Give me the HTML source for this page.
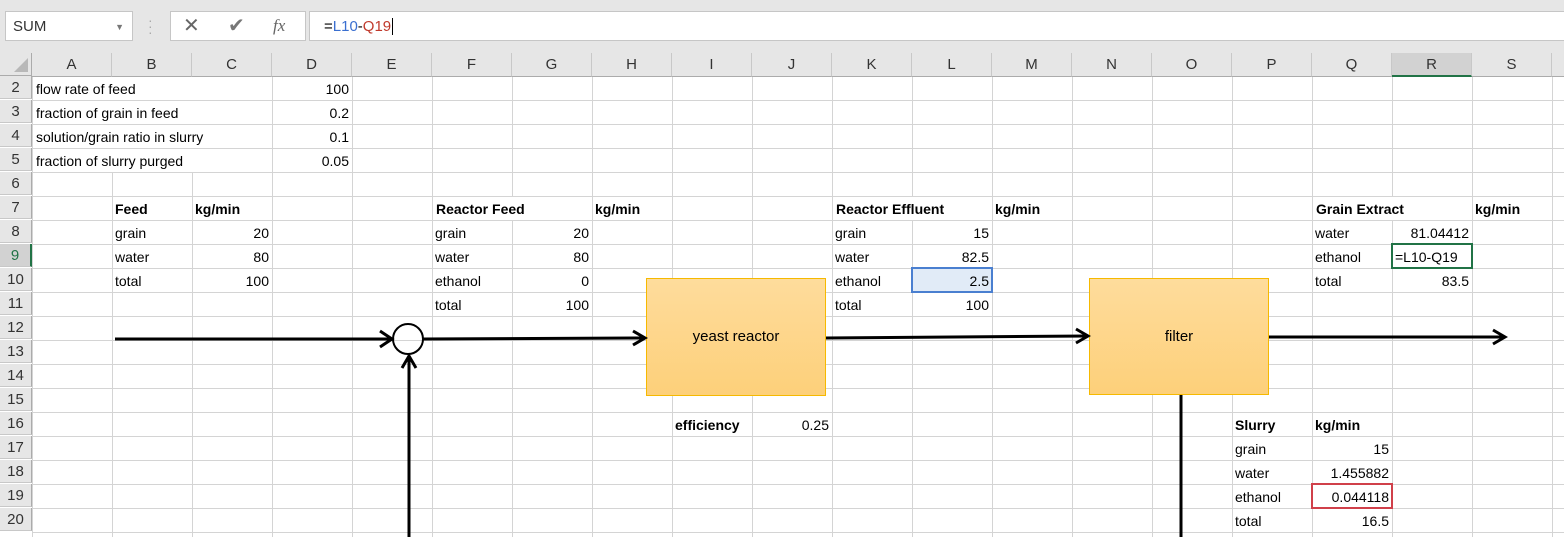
<!DOCTYPE html>
<html><head><meta charset="utf-8"><style>
body{margin:0;width:1564px;height:537px;overflow:hidden;background:#fff;font-family:"Liberation Sans",Arial,sans-serif;position:relative}
.top{position:absolute;left:0;top:0;width:1564px;height:53px;background:#e6e6e6}
.box{position:absolute;background:#fff;border:1px solid #c6c6c6;box-sizing:border-box}
.grid{position:absolute;left:32px;top:76px;width:1532px;height:461px;
background-image:linear-gradient(to right,#d4d4d4 1px,transparent 1px),linear-gradient(to bottom,#d4d4d4 1px,transparent 1px);
background-size:80px 24px;background-position:0 0}
.ch{position:absolute;top:53px;height:23px;width:79px;background:#e6e6e6;border-right:1px solid #c8c8c8;border-bottom:1px solid #ababab;text-align:center;font-size:15px;line-height:24px;color:#333}
.rh{position:absolute;left:0;height:23px;background:#e6e6e6;border-right:1px solid #ababab;border-bottom:1px solid #c8c8c8;text-align:center;box-sizing:border-box;width:32px;font-size:15px;line-height:24px;color:#333}
.c{position:absolute;height:23px;line-height:25px;font-size:14px;color:#000;white-space:nowrap;padding:0 3px;box-sizing:border-box}
.w{background:#fff}
.r{text-align:right}
.b{font-weight:bold}
.shape{position:absolute;background:linear-gradient(#fedc9c,#fdd07a);border:1px solid #f6b900;box-sizing:border-box;text-align:center;font-size:15px}
</style></head><body>
<div class="top"></div>
<div class="box" style="left:5px;top:11px;width:128px;height:30px;font-size:15px;line-height:30px;padding-left:7px;color:#333">SUM<span style="position:absolute;right:8px;top:0;font-size:9px;color:#777">▼</span></div>
<div style="position:absolute;left:148px;top:17px;color:#aaa;font-size:14px;line-height:6px">·<br>·<br>·</div>
<div class="box" style="left:170px;top:11px;width:136px;height:30px;color:#666;font-size:20px;line-height:28px">
<span style="position:absolute;left:12px">✕</span><span style="position:absolute;left:57px;color:#777">✔</span><span style="position:absolute;left:102px;font-family:'Liberation Serif',serif;font-style:italic;font-size:17px">fx</span></div>
<div class="box" style="left:309px;top:11px;width:1255px;height:30px;font-size:15px;line-height:30px;padding-left:14px;border-right:none"><span>=</span><span style="color:#3a6fd0">L10</span>-<span style="color:#c0392b">Q19</span><span style="border-left:1px solid #000;margin-left:1px"></span></div>
<div style="position:absolute;left:0;top:53px;width:32px;height:23px;background:#e6e6e6;border-right:1px solid #ababab;border-bottom:1px solid #ababab;box-sizing:border-box"><div style="position:absolute;right:3px;bottom:3px;width:0;height:0;border-left:14px solid transparent;border-bottom:14px solid #b8b8b8"></div></div>
<div class="grid"></div>
<div class="ch" style="left:32px">A</div><div class="ch" style="left:112px">B</div><div class="ch" style="left:192px">C</div><div class="ch" style="left:272px">D</div><div class="ch" style="left:352px">E</div><div class="ch" style="left:432px">F</div><div class="ch" style="left:512px">G</div><div class="ch" style="left:592px">H</div><div class="ch" style="left:672px">I</div><div class="ch" style="left:752px">J</div><div class="ch" style="left:832px">K</div><div class="ch" style="left:912px">L</div><div class="ch" style="left:992px">M</div><div class="ch" style="left:1072px">N</div><div class="ch" style="left:1152px">O</div><div class="ch" style="left:1232px">P</div><div class="ch" style="left:1312px">Q</div><div class="ch" style="left:1392px;background:#d2d2d2;border-bottom:2px solid #217346;height:22px">R</div><div class="ch" style="left:1472px">S</div><div class="ch" style="left:1552px"></div>
<div class="rh" style="top:76px">2</div><div class="rh" style="top:100px">3</div><div class="rh" style="top:124px">4</div><div class="rh" style="top:148px">5</div><div class="rh" style="top:172px">6</div><div class="rh" style="top:196px">7</div><div class="rh" style="top:220px">8</div><div class="rh" style="top:244px;background:#d2d2d2;border-right:2px solid #217346;color:#217346">9</div><div class="rh" style="top:268px">10</div><div class="rh" style="top:292px">11</div><div class="rh" style="top:316px">12</div><div class="rh" style="top:340px">13</div><div class="rh" style="top:364px">14</div><div class="rh" style="top:388px">15</div><div class="rh" style="top:412px">16</div><div class="rh" style="top:436px">17</div><div class="rh" style="top:460px">18</div><div class="rh" style="top:484px">19</div><div class="rh" style="top:508px">20</div>

<div style="position:absolute;left:911px;top:267px;width:82px;height:26px;background:#e1ebf7;border:2px solid #4a7fd0;box-sizing:border-box"></div>
<div style="position:absolute;left:1391px;top:243px;width:82px;height:26px;border:2px solid #217346;box-sizing:border-box;background:#fff"></div>
<div style="position:absolute;left:1311px;top:483px;width:82px;height:26px;border:2px solid #d0404a;box-sizing:border-box;background:#fff"></div>

<div class="c w" style="left:33px;top:77px;width:239px">flow rate of feed</div><div class="c r" style="left:272px;top:77px;width:80px">100</div>
<div class="c w" style="left:33px;top:101px;width:239px">fraction of grain in feed</div><div class="c r" style="left:272px;top:101px;width:80px">0.2</div>
<div class="c w" style="left:33px;top:125px;width:239px">solution/grain ratio in slurry</div><div class="c r" style="left:272px;top:125px;width:80px">0.1</div>
<div class="c w" style="left:33px;top:149px;width:239px">fraction of slurry purged</div><div class="c r" style="left:272px;top:149px;width:80px">0.05</div>

<div class="c b" style="left:112px;top:197px">Feed</div><div class="c b" style="left:192px;top:197px">kg/min</div>
<div class="c" style="left:112px;top:221px">grain</div><div class="c r" style="left:192px;top:221px;width:80px">20</div>
<div class="c" style="left:112px;top:245px">water</div><div class="c r" style="left:192px;top:245px;width:80px">80</div>
<div class="c" style="left:112px;top:269px">total</div><div class="c r" style="left:192px;top:269px;width:80px">100</div>

<div class="c b w" style="left:433px;top:197px;width:159px">Reactor Feed</div><div class="c b" style="left:592px;top:197px">kg/min</div>
<div class="c" style="left:432px;top:221px">grain</div><div class="c r" style="left:512px;top:221px;width:80px">20</div>
<div class="c" style="left:432px;top:245px">water</div><div class="c r" style="left:512px;top:245px;width:80px">80</div>
<div class="c" style="left:432px;top:269px">ethanol</div><div class="c r" style="left:512px;top:269px;width:80px">0</div>
<div class="c" style="left:432px;top:293px">total</div><div class="c r" style="left:512px;top:293px;width:80px">100</div>

<div class="c b w" style="left:833px;top:197px;width:159px">Reactor Effluent</div><div class="c b" style="left:992px;top:197px">kg/min</div>
<div class="c" style="left:832px;top:221px">grain</div><div class="c r" style="left:912px;top:221px;width:80px">15</div>
<div class="c" style="left:832px;top:245px">water</div><div class="c r" style="left:912px;top:245px;width:80px">82.5</div>
<div class="c" style="left:832px;top:269px">ethanol</div><div class="c r" style="left:912px;top:269px;width:80px">2.5</div>
<div class="c" style="left:832px;top:293px">total</div><div class="c r" style="left:912px;top:293px;width:80px">100</div>

<div class="c b w" style="left:1313px;top:197px;width:159px">Grain Extract</div><div class="c b" style="left:1472px;top:197px">kg/min</div>
<div class="c" style="left:1312px;top:221px">water</div><div class="c r" style="left:1392px;top:221px;width:80px">81.04412</div>
<div class="c" style="left:1312px;top:245px">ethanol</div><div class="c" style="left:1392px;top:245px;width:80px">=L10-Q19</div>
<div class="c" style="left:1312px;top:269px">total</div><div class="c r" style="left:1392px;top:269px;width:80px">83.5</div>

<div class="c b" style="left:672px;top:413px">efficiency</div><div class="c r" style="left:752px;top:413px;width:80px">0.25</div>

<div class="c b" style="left:1232px;top:413px">Slurry</div><div class="c b" style="left:1312px;top:413px">kg/min</div>
<div class="c" style="left:1232px;top:437px">grain</div><div class="c r" style="left:1312px;top:437px;width:80px">15</div>
<div class="c" style="left:1232px;top:461px">water</div><div class="c r" style="left:1312px;top:461px;width:80px">1.455882</div>
<div class="c" style="left:1232px;top:485px">ethanol</div><div class="c r" style="left:1312px;top:485px;width:80px">0.044118</div>
<div class="c" style="left:1232px;top:509px">total</div><div class="c r" style="left:1312px;top:509px;width:80px">16.5</div>

<div class="shape" style="left:646px;top:278px;width:180px;height:118px;line-height:116px">yeast reactor</div>
<div class="shape" style="left:1089px;top:278px;width:180px;height:117px;line-height:116px">filter</div>

<svg width="1564" height="537" style="position:absolute;left:0;top:0" fill="none" stroke="#000" stroke-width="3">
<line x1="115" y1="339" x2="391" y2="339"/><polyline points="380,331 392,339 380,347"/>
<circle cx="408" cy="339" r="15" stroke-width="2"/>
<line x1="423" y1="339" x2="644" y2="338"/><polyline points="633,331 645,338 633,345"/>
<line x1="826" y1="338" x2="1087" y2="336"/><polyline points="1076,329 1088,336 1076,343"/>
<line x1="1269" y1="337" x2="1504" y2="337"/><polyline points="1493,330 1505,337 1493,344"/>
<line x1="409" y1="537" x2="409" y2="357"/><polyline points="402,368 409,356 416,368"/>
<line x1="1181" y1="395" x2="1181" y2="537"/>
</svg>
</body></html>
